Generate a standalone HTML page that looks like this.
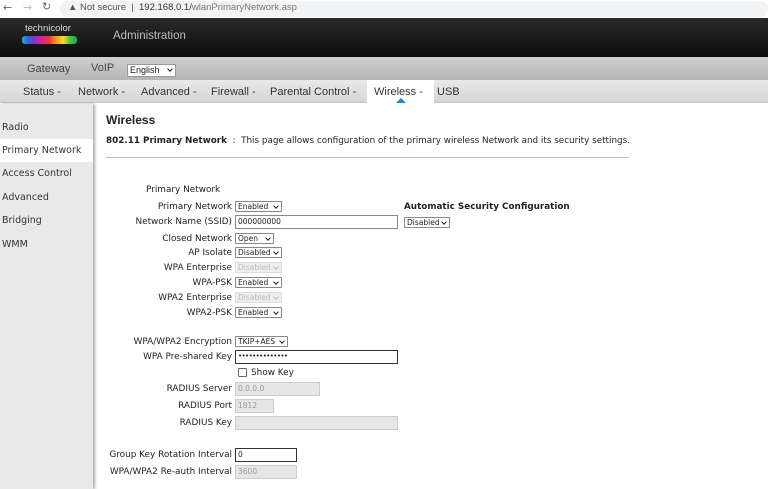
<!DOCTYPE html>
<html><head><meta charset="utf-8"><style>
*{margin:0;padding:0;box-sizing:border-box}
body{width:768px;height:489px;overflow:hidden;background:#fff;font-family:"DejaVu Sans","Liberation Sans",sans-serif;position:relative;color:#222}
.a{position:absolute;white-space:nowrap}
.lbl{position:absolute;right:536px;font-size:8.9px;color:#222;white-space:nowrap}
.sel{position:absolute;height:11px;border:1px solid #888;background:#fff;font-size:7.5px;line-height:9px;padding-left:2px;color:#222;border-radius:1px}
.sel:after{content:"";position:absolute;right:3px;top:2px;width:3px;height:3px;border-right:1.2px solid #222;border-bottom:1.2px solid #222;transform:rotate(45deg)}
.dis{background:#eee;border-color:#ddd;color:#bbb}
.dis:after{border-color:#bbb}
.inp{position:absolute;height:14px;border:1px solid #888;background:#fff;font-size:7.5px;line-height:12px;padding-left:2px}
.ro{background:#e6e6e6;border-color:#ccc;color:#999}
.side{position:absolute;left:2px;font-size:9.5px;color:#333}
.nav{position:absolute;top:86px;font-size:11px;color:#333;font-family:"Liberation Sans",sans-serif}
</style></head><body>
<div class="a" style="left:0;top:0;width:768px;height:18px;background:#fff"></div>
<div class="a" style="left:3px;top:1px;font-size:11px;color:#666">&#8592;</div>
<div class="a" style="left:23px;top:1px;font-size:11px;color:#bbb">&#8594;</div>
<div class="a" style="left:42px;top:0px;font-size:11px;color:#666">&#8635;</div>
<div class="a" style="left:60px;top:1px;width:708px;height:16px;background:#f1f3f4;border-radius:8px"></div>
<div class="a" style="left:68px;top:2px;font-size:9.5px;color:#555;font-family:'Liberation Sans',sans-serif">&#9650; Not secure &nbsp;| &nbsp;<span style="color:#333">192.168.0.1/</span><span style="color:#777">wlanPrimaryNetwork.asp</span></div>
<div class="a" style="left:0;top:18px;width:768px;height:39px;background:linear-gradient(#2a2a2a,#0c0c0c)"></div>
<div class="a" style="left:25px;top:23px;font-size:9.5px;color:#ddd;font-family:'Liberation Sans',sans-serif">technicolor</div>
<div class="a" style="left:22px;top:36px;width:55px;height:8px;border-radius:3px;background:linear-gradient(90deg,#1ab0e8,#3a5bd8,#9b2cc0,#e0228a,#f03a2a,#f39a1a,#f4e02a,#4cc23a,#19a860)"></div>
<div class="a" style="left:113px;top:30px;font-size:11.5px;color:#bbb;font-family:'Liberation Sans',sans-serif">Administration</div>
<div class="a" style="left:0;top:57px;width:768px;height:23px;background:linear-gradient(#cfcfcf,#b5b5b5)"></div>
<div class="a" style="left:27px;top:63px;font-size:11px;color:#444;font-family:'Liberation Sans',sans-serif">Gateway</div>
<div class="a" style="left:91px;top:62px;font-size:11px;color:#444;font-family:'Liberation Sans',sans-serif">VoIP</div>
<div class="sel" style="left:127px;top:64px;width:49px;height:13px;font-size:9px;line-height:11px;font-family:'Liberation Sans',sans-serif;border-color:#999">English</div>
<div class="a" style="left:0;top:80px;width:768px;height:23px;background:linear-gradient(#e9e9e9,#d6d6d6);border-bottom:1px solid #c4c4c4"></div>
<div class="a" style="left:367px;top:80px;width:67px;height:23px;background:#fff"></div>
<div class="a" style="left:396px;top:98px;width:0;height:0;border-left:5px solid transparent;border-right:5px solid transparent;border-bottom:5px solid #2a7fd0"></div>
<div class="nav" style="left:23px">Status -</div>
<div class="nav" style="left:78px">Network -</div>
<div class="nav" style="left:141px">Advanced -</div>
<div class="nav" style="left:211px">Firewall -</div>
<div class="nav" style="left:270px">Parental Control -</div>
<div class="nav" style="left:374px">Wireless -</div>
<div class="nav" style="left:437px">USB</div>
<div class="a" style="left:0;top:104px;width:93px;height:385px;background:#e9e9e9;box-shadow:2px 0 3px #aaa"></div>
<div class="a" style="left:0;top:139px;width:93px;height:23px;background:#fff"></div>
<div class="side" style="top:122px">Radio</div>
<div class="side" style="top:145px">Primary Network</div>
<div class="side" style="top:168px">Access Control</div>
<div class="side" style="top:192px">Advanced</div>
<div class="side" style="top:215px">Bridging</div>
<div class="side" style="top:239px">WMM</div>
<div class="a" style="left:106px;top:113px;font-size:12px;font-weight:bold;color:#222;font-family:'Liberation Sans',sans-serif">Wireless</div>
<div class="a" style="left:106px;top:136px;font-size:8.8px;color:#222"><b>802.11 Primary Network</b> &nbsp;: &nbsp;This page allows configuration of the primary wireless Network and its security settings.</div>
<div class="a" style="left:106px;top:157px;width:523px;height:1px;background:#bbb"></div>
<div class="a" style="left:146px;top:185px;font-size:8.9px">Primary Network</div>
<div class="lbl" style="top:202px">Primary Network</div><div class="sel" style="left:235px;top:201px;width:47px">Enabled</div>
<div class="lbl" style="top:217px">Network Name (SSID)</div><div class="inp" style="left:235px;top:215px;width:163px">000000000</div>
<div class="lbl" style="top:234px">Closed Network</div><div class="sel" style="left:235px;top:233px;width:39px">Open</div>
<div class="lbl" style="top:248px">AP Isolate</div><div class="sel" style="left:235px;top:247px;width:47px">Disabled</div>
<div class="lbl" style="top:263px">WPA Enterprise</div><div class="sel dis" style="left:235px;top:262px;width:47px">Disabled</div>
<div class="lbl" style="top:278px">WPA-PSK</div><div class="sel" style="left:235px;top:277px;width:47px">Enabled</div>
<div class="lbl" style="top:293px">WPA2 Enterprise</div><div class="sel dis" style="left:235px;top:292px;width:47px">Disabled</div>
<div class="lbl" style="top:308px">WPA2-PSK</div><div class="sel" style="left:235px;top:307px;width:47px">Enabled</div>
<div class="a" style="left:404px;top:202px;font-size:8.8px;font-weight:bold">Automatic Security Configuration</div>
<div class="sel" style="left:404px;top:217px;width:46px">Disabled</div>
<div class="lbl" style="top:337px">WPA/WPA2 Encryption</div><div class="sel" style="left:235px;top:336px;width:53px">TKIP+AES</div>
<div class="lbl" style="top:352px">WPA Pre-shared Key</div><div class="inp" style="left:235px;top:350px;width:163px;border:1.5px solid #333;font-size:7px;line-height:11px;letter-spacing:-0.6px">••••••••••••••</div>
<div class="a" style="left:238px;top:368px;width:9px;height:9px;border:1px solid #666;border-radius:1px;background:#fff"></div>
<div class="a" style="left:251px;top:368px;font-size:8.9px">Show Key</div>
<div class="lbl" style="top:384px">RADIUS Server</div><div class="inp ro" style="left:235px;top:382px;width:85px">0.0.0.0</div>
<div class="lbl" style="top:401px">RADIUS Port</div><div class="inp ro" style="left:235px;top:399px;width:39px">1812</div>
<div class="lbl" style="top:418px">RADIUS Key</div><div class="inp ro" style="left:235px;top:416px;width:163px"></div>
<div class="lbl" style="top:450px">Group Key Rotation Interval</div><div class="inp" style="left:235px;top:448px;width:62px;border:1.5px solid #333">0</div>
<div class="lbl" style="top:467px">WPA/WPA2 Re-auth Interval</div><div class="inp ro" style="left:235px;top:465px;width:62px">3600</div>
</body></html>
